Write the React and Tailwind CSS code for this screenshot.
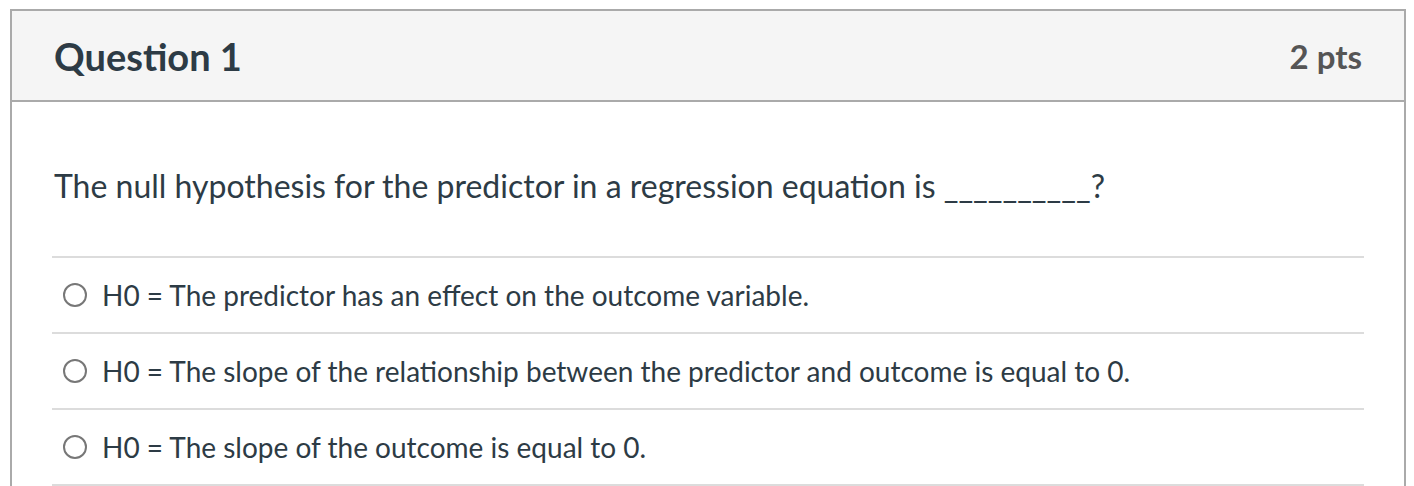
const QUESTION = {
  title: 'Question 1',
  points: '2 pts',
  text: 'The null hypothesis for the predictor in a regression equation is __________?',
  answers: [
    'H0 = The predictor has an effect on the outcome variable.',
    'H0 = The slope of the relationship between the predictor and outcome is equal to 0.',
    'H0 = The slope of the outcome is equal to 0.',
  ],
};

function AnswerRow({ label }) {
  return (
    <label className="flex items-center h-[76px] border-t-2 border-[#dcdcdc] pl-[11px]">
      <span className="w-[24px] h-[24px] rounded-full border-2 border-[#777] bg-white shrink-0" />
      <span className="ml-[15px] text-[28px] leading-[36px] text-[#2d3b45]">{label}</span>
    </label>
  );
}

export default function App() {
  return (
    <div
      className="w-full h-[486px] overflow-hidden bg-white pt-[9px] pl-[10px] pr-[8px]"
      style={{ fontFamily: 'Lato, "Liberation Sans", sans-serif' }}
    >
      <div className="border-2 border-b-0 border-[#aaa] h-[600px]">
        <div className="flex items-center justify-between h-[91px] bg-[#f5f5f5] border-b-2 border-[#aaa] px-[42px]">
          <h2 className="text-[38px] leading-[46px] font-bold text-[#2d3b45]">{QUESTION.title}</h2>
          <span className="text-[33px] leading-[40px] font-bold text-[#555]">{QUESTION.points}</span>
        </div>
        <div className="px-[40px]">
          <div className="pt-[63px] pb-[49px] text-[32px] leading-[42px] text-[#2d3b45] pl-[2px]">
            {QUESTION.text}
          </div>
          {QUESTION.answers.map((a) => (
            <AnswerRow key={a} label={a} />
          ))}
          <div className="border-t-2 border-[#dcdcdc]" />
        </div>
      </div>
    </div>
  );
}
